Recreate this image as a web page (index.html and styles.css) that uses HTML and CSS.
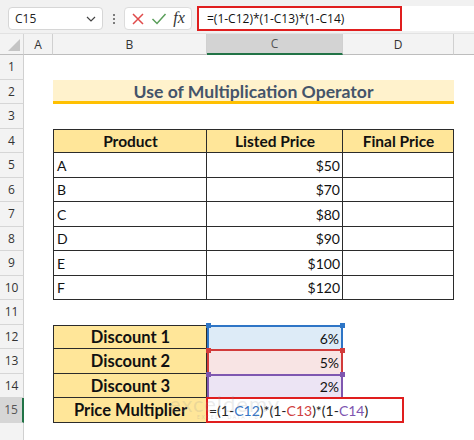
FILE: index.html
```html
<!DOCTYPE html>
<html>
<head>
<meta charset="utf-8">
<link rel="stylesheet" href="styles.css">
</head>
<body>
<div class="app">
  <div class="toolbar">
    <div class="namebox">
      <span class="nb-text">C15</span>
      <svg class="chev" width="10" height="6" viewBox="0 0 10 6"><path d="M1 1 L5 5 L9 1" fill="none" stroke="#444" stroke-width="1.2"/></svg>
    </div>
    <div class="vdots"><span></span><span></span><span></span></div>
    <div class="iconbox">
      <svg width="14" height="14" viewBox="0 0 14 14"><path d="M2 2 L12 12 M12 2 L2 12" stroke="#e04b4b" stroke-width="1.5" fill="none"/></svg>
      <svg width="16" height="14" viewBox="0 0 16 14"><path d="M1.5 7 L6 11.5 L14.5 2" stroke="#5a9e5a" stroke-width="1.5" fill="none"/></svg>
      <span class="fx">fx</span>
    </div>
    <div class="formula">
      <div class="formula-box">=(1-C12)*(1-C13)*(1-C14)</div>
    </div>
  </div>

  <div class="sheet">
    <div class="corner"><svg width="12" height="12" viewBox="0 0 12 12"><path d="M12 0 L12 12 L0 12 Z" fill="#c4c4c4"/></svg></div>
    <div class="ch">A</div>
    <div class="ch">B</div>
    <div class="ch sel">C</div>
    <div class="ch">D</div>
    <div class="ch last"></div>

    <div class="rh">1</div><div></div><div></div><div></div><div></div><div></div>
    <div class="rh">2</div><div></div><div class="title">Use of Multiplication Operator</div><div></div>
    <div class="rh">3</div><div></div><div></div><div></div><div></div><div></div>
    <div class="rh">4</div><div></div>
    <div class="c th tl tt">Product</div>
    <div class="c th tt">Listed Price</div>
    <div class="c th tt">Final Price</div>
    <div></div>
    <div class="rh">5</div><div></div><div class="c tl left">A</div><div class="c right">$50</div><div class="c"></div><div></div>
    <div class="rh">6</div><div></div><div class="c tl left">B</div><div class="c right">$70</div><div class="c"></div><div></div>
    <div class="rh">7</div><div></div><div class="c tl left">C</div><div class="c right">$80</div><div class="c"></div><div></div>
    <div class="rh">8</div><div></div><div class="c tl left">D</div><div class="c right">$90</div><div class="c"></div><div></div>
    <div class="rh">9</div><div></div><div class="c tl left">E</div><div class="c right">$100</div><div class="c"></div><div></div>
    <div class="rh">10</div><div></div><div class="c tl left">F</div><div class="c right">$120</div><div class="c"></div><div></div>
    <div class="rh">11</div><div></div><div></div><div></div><div></div><div></div>
    <div class="rh">12</div><div></div>
    <div class="c lab tl tt">Discount 1</div>
    <div class="c right rng blue">6%<i class="hd tl-h"></i><i class="hd tr-h"></i></div>
    <div></div><div></div>
    <div class="rh">13</div><div></div>
    <div class="c lab tl">Discount 2</div>
    <div class="c right rng red">5%<i class="hd tl-h"></i><i class="hd tr-h"></i></div>
    <div></div><div></div>
    <div class="rh">14</div><div></div>
    <div class="c lab tl">Discount 3</div>
    <div class="c right rng purple">2%<i class="hd tl-h"></i><i class="hd tr-h"></i></div>
    <div></div><div></div>
    <div class="rh rsel">15</div><div></div>
    <div class="c lab tl">Price Multiplier</div>
    <div class="c edit-cell">
      <div class="edit">=(1-<span class="cb">C12</span>)*(1-<span class="cr">C13</span>)*(1-<span class="cp">C14</span>)</div>
      <div class="wm"><span class="wm-big">exceldemy</span><span class="wm-small">EXCEL · DATA · BI</span></div>
    </div>
    <div></div><div></div>
    <div class="rh"></div><div></div><div></div><div></div><div></div><div></div>
  </div>
</div>
</body>
</html>
```

FILE: styles.css
```css
* { box-sizing: border-box; }
html, body { margin: 0; padding: 0; background: #fff; }
body { font-family: Lato, "Liberation Sans", sans-serif; color: #111; width: 474px; height: 440px; overflow: hidden; }

.toolbar {
  height: 34px;
  background: #f1f1f1;
  display: flex;
  align-items: flex-start;
  padding-top: 7px;
  border-bottom: 1px solid #e2e2e2;
}
.namebox {
  margin-left: 8px;
  width: 95px;
  height: 23px;
  background: #fff;
  border: 1px solid #d6d6d6;
  border-radius: 4px;
  display: flex;
  align-items: center;
  justify-content: space-between;
  padding: 0 6px 0 6px;
  font-family: "Open Sans", "Liberation Sans", sans-serif;
  font-size: 12px;
  color: #222;
}
.vdots {
  width: 21px;
  height: 23px;
  display: flex;
  flex-direction: column;
  align-items: center;
  justify-content: center;
  gap: 2px;
}
.vdots span { width: 2px; height: 2px; background: #555; border-radius: 1px; }
.iconbox {
  width: 68px;
  height: 23px;
  background: #fff;
  border: 1px solid #dcdcdc;
  border-radius: 4px;
  display: flex;
  align-items: center;
  justify-content: space-around;
  padding: 0 3px;
}
.fx {
  font-family: "Liberation Serif", "DejaVu Serif", serif;
  font-style: italic;
  font-size: 16px;
  color: #333;
  margin-top: -2px;
}
.formula {
  flex: 1;
  margin-left: 5px;
  margin-top: -1px;
  height: 25px;
  background: #fff;
}
.formula-box {
  width: 205px;
  height: 25px;
  border: 2px solid #e01e1e;
  font-family: "Open Sans", "Liberation Sans", sans-serif;
  font-size: 12px;
  color: #111;
  padding: 2px 0 0 8px;
  line-height: 17px;
}

.sheet {
  display: grid;
  grid-template-columns: 24px 29px 154px 136px 111px 20px;
  grid-template-rows: 21px repeat(16, 24.5px);
}
.corner {
  background: #f3f3f3;
  border-right: 1px solid #d4d4d4;
  border-bottom: 1px solid #bdbdbd;
  display: flex;
  align-items: flex-end;
  justify-content: flex-end;
  padding: 0 3px 3px 0;
}
.ch {
  background: #f3f3f3;
  border-right: 1px solid #d0d0d0;
  border-bottom: 1px solid #bdbdbd;
  font-family: "Open Sans", "Liberation Sans", sans-serif;
  font-size: 12px;
  color: #333;
  display: flex;
  align-items: center;
  justify-content: center;
}
.ch.last { border-right: none; }
.ch.sel { background: #d3d3d3; border-bottom: 2px solid #217346; color: #555; }
.rh {
  background: #f3f3f3;
  border-right: 1px solid #d0d0d0;
  border-bottom: 1px solid #d6d6d6;
  font-family: "Open Sans", "Liberation Sans", sans-serif;
  font-size: 12px;
  color: #333;
  display: flex;
  align-items: center;
  justify-content: center;
}
.rh.rsel { background: #d6d6d6; border-right: 2px solid #217346; color: #555; }

.title {
  grid-column: span 3;
  background: #fff2cc;
  border-bottom: 3px solid #ffc000;
  display: flex;
  align-items: center;
  justify-content: center;
  font-weight: 700;
  font-size: 17.6px;
  color: #44546a;
  padding-top: 2px;
}

.c {
  border-right: 1px solid #2b2b2b;
  border-bottom: 1px solid #2b2b2b;
  display: flex;
  align-items: center;
  font-size: 14px;
  padding: 1px 2px 0 3px;
  position: relative;
}
.tl { border-left: 1px solid #2b2b2b; }
.tt { border-top: 1px solid #2b2b2b; }
.left { justify-content: flex-start; }
.right { justify-content: flex-end; }
.th {
  background: #ffe699;
  font-weight: 700;
  font-size: 15.5px;
  justify-content: center;
}
.lab {
  background: #ffe699;
  font-weight: 700;
  font-size: 16.5px;
  justify-content: center;
}

.rng { border-left: 2px solid; border-right: 2px solid; border-top: 2px solid; border-bottom: none; }
.rng.blue { border-color: #2e75c6; background: #ddebf7; }
.rng.red { border-color: #d23b3b; background: #f8e4e4; }
.rng.purple { border-color: #7f57b0; background: #ece4f4; border-bottom: 1px solid #2b2b2b; }
.hd { position: absolute; width: 5px; height: 5px; top: -3.5px; }
.tl-h { left: -3.5px; }
.tr-h { right: -3.5px; }
.blue .hd { background: #2e75c6; }
.red .hd { background: #d23b3b; }
.purple .hd { background: #7f57b0; }

.edit-cell { background: #fff; overflow: visible; }
.edit {
  position: absolute;
  left: -1px;
  top: -1px;
  width: 198px;
  height: 26px;
  border: 2px solid #e01e1e;
  background: #fff;
  font-size: 14px;
  color: #222;
  padding: 2px 0 0 1px;
  line-height: 19px;
  z-index: 2;
  white-space: nowrap;
}
.cb { color: #3474c4; }
.cr { color: #d04040; }
.cp { color: #7e55b0; }
.wm {
  position: absolute;
  left: -38px;
  top: -5px;
  z-index: 3;
  display: flex;
  flex-direction: column;
  pointer-events: none;
  line-height: 1;
  font-weight: 400;
}
.wm-big { font-size: 22px; color: rgba(150,150,150,0.2); letter-spacing: 1px; white-space: nowrap; }
.wm-small { font-size: 5px; color: rgba(150,150,150,0.3); letter-spacing: 1.5px; margin-left: 28px; white-space: nowrap; }
```
